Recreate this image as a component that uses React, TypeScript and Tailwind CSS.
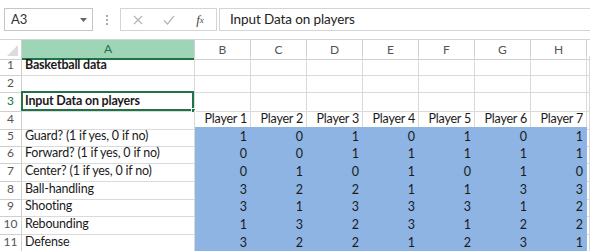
import React from 'react';

const cols = ['B', 'C', 'D', 'E', 'F', 'G', 'H'];

const rows: { label: string; values: number[] }[] = [
  { label: 'Guard? (1 if yes, 0 if no)', values: [1, 0, 1, 0, 1, 0, 1] },
  { label: 'Forward? (1 if yes, 0 if no)', values: [0, 0, 1, 1, 1, 1, 1] },
  { label: 'Center? (1 if yes, 0 if no)', values: [0, 1, 0, 1, 0, 1, 0] },
  { label: 'Ball-handling', values: [3, 2, 2, 1, 1, 3, 3] },
  { label: 'Shooting', values: [3, 1, 3, 3, 3, 1, 2] },
  { label: 'Rebounding', values: [1, 3, 2, 3, 1, 2, 2] },
  { label: 'Defense', values: [3, 2, 2, 1, 2, 3, 1] },
];

const heights = ['h-[18px]', 'h-[18px]', 'h-[18px]', 'h-[17px]', 'h-[17px]', 'h-[18px]', 'h-[18px]', 'h-[17px]', 'h-[18px]', 'h-[18px]', 'h-[17px]'];

const grid = 'grid grid-cols-[22px_173px_repeat(7,56px)_1fr]';
const cell = 'border-r border-b border-[#dadada] flex items-center text-[12.5px] tracking-[-0.2px] text-[#1a1a1a] whitespace-nowrap';
const rowHead = 'border-r border-b border-[#cfcfcf] flex items-center justify-center text-[12px] text-[#555]';

function Toolbar() {
  return (
    <div className="flex h-[39px] items-start pt-[8px] pl-[4px] bg-white">
      <div className="relative w-[89px] h-[23px] border border-[#c6c6c6] flex items-center pl-[6px] text-[13px] text-[#333]">
        A3
        <svg className="absolute right-[5px] top-[9px]" width="7" height="4" viewBox="0 0 7 4">
          <path d="M0 0h7L3.5 4z" fill="#666" />
        </svg>
      </div>
      <div className="w-[27px] h-[23px] flex flex-col items-center justify-center gap-[2px]">
        <span className="w-[2px] h-[2px] bg-[#aaa]" />
        <span className="w-[2px] h-[2px] bg-[#aaa]" />
        <span className="w-[2px] h-[2px] bg-[#aaa]" />
      </div>
      <div className="w-[97px] h-[23px] border border-[#d4d4d4] flex items-center">
        <div className="w-[33px] flex justify-center">
          <svg width="10" height="10" viewBox="0 0 10 10">
            <path d="M1 1l8 8M9 1l-8 8" stroke="#b5b5b5" strokeWidth="1.2" />
          </svg>
        </div>
        <div className="w-[30px] flex justify-center">
          <svg width="12" height="10" viewBox="0 0 12 10">
            <path d="M1 5.5l3.5 3.5L11 1" stroke="#b5b5b5" strokeWidth="1.2" fill="none" />
          </svg>
        </div>
        <div className="w-[32px] flex justify-center font-['Liberation_Serif',serif] italic text-[13px] text-[#444]">
          f<span className="text-[9px] mt-[4px]">x</span>
        </div>
      </div>
      <div className="ml-[2px] flex-1 h-[23px] border-y border-l border-[#d4d4d4] flex items-center pl-[10px] text-[13.5px] tracking-[-0.1px] text-[#222]">
        Input Data on players
      </div>
    </div>
  );
}

export default function App() {
  return (
    <div className="w-[590px] h-[251px] overflow-hidden bg-white font-['Lato',sans-serif]">
      <Toolbar />
      <div className={`${grid} h-[17px] border-t border-[#d4d4d4]`}>
        <div className="relative border-r border-b border-[#cfcfcf]">
          <svg className="absolute right-[3px] bottom-[3px]" width="11" height="11" viewBox="0 0 11 11">
            <path d="M11 0v11H0z" fill="#dcdcdc" />
          </svg>
        </div>
        <div className="bg-[#9fd5b7] border-r border-[#cfcfcf] border-b-2 border-b-[#217346] flex items-center justify-center text-[12px] text-[#217346]">
          A
        </div>
        {cols.map((c) => (
          <div key={c} className={rowHead}>
            {c}
          </div>
        ))}
        <div className="border-b border-[#cfcfcf]" />
      </div>

      {[0, 1, 2, 3].map((i) => (
        <div key={i} className={`${grid} ${heights[i]}`}>
          <div className={`${rowHead} ${i === 2 ? 'text-[#217346]' : ''}`}>{i + 1}</div>
          <div className={`${cell} relative pl-[3px] font-bold`}>
            {i === 0 && 'Basketball data'}
            {i === 2 && 'Input Data on players'}
            {i === 2 && (
              <div className="absolute -left-px -top-px right-0 bottom-0 border-2 border-[#217346]">
                <div className="absolute -right-[4px] -bottom-[4px] w-[5px] h-[5px] bg-[#217346] border border-white" />
              </div>
            )}
          </div>
          {cols.map((c, j) => (
            <div key={c} className={`${cell} justify-end pr-[3px]`}>
              {i === 3 && `Player ${j + 1}`}
            </div>
          ))}
          <div className={cell} />
        </div>
      ))}

      {rows.map((r, i) => (
        <div key={r.label} className={`${grid} ${heights[i + 4]}`}>
          <div className={rowHead}>{i + 5}</div>
          <div className={`${cell} pl-[3px]`}>{r.label}</div>
          {r.values.map((v, j) => (
            <div key={j} className="bg-[#8eb4e3] flex items-center justify-end pr-[4px] text-[12.5px] text-[#1a1a1a]">
              {v}
            </div>
          ))}
          <div className={cell} />
        </div>
      ))}
    </div>
  );
}
